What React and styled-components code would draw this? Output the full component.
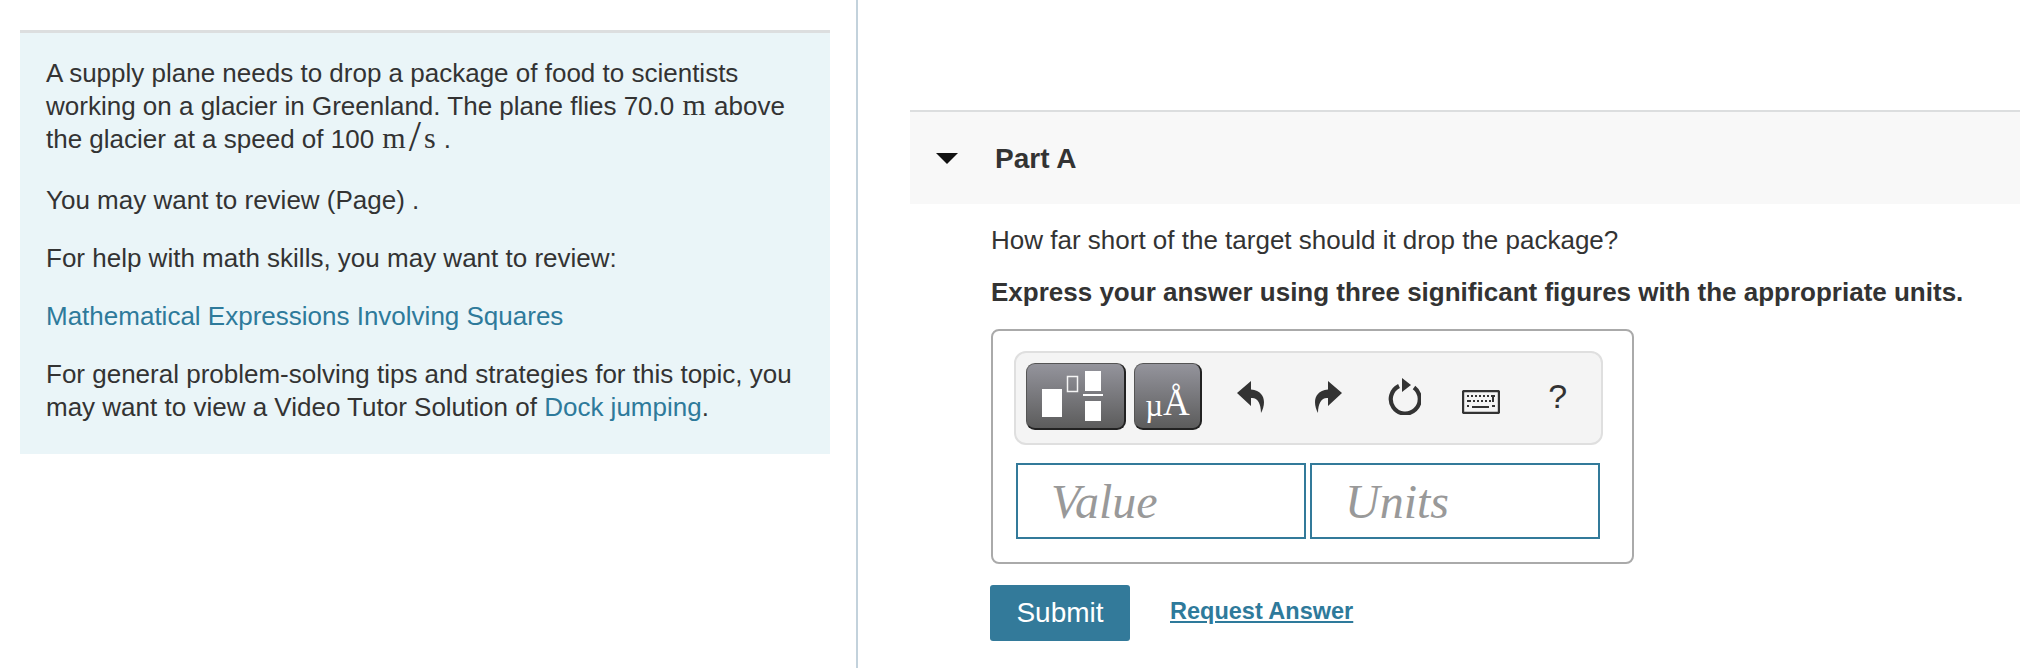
import React from 'react';
import styled, { createGlobalStyle } from 'styled-components';

const GlobalStyle = createGlobalStyle`
  html, body {
    margin: 0;
    padding: 0;
    background: #fff;
  }
  body {
    font-family: "Liberation Sans", Arial, sans-serif;
    font-size: 26px;
    line-height: 32.5px;
    color: #333;
  }
`;

const Page = styled.div`
  display: flex;
  height: 668px;
  overflow: hidden;
`;

const LeftColumn = styled.div`
  box-sizing: border-box;
  flex: 0 0 858px;
  padding: 30px 26px 0 20px;
  border-right: 2px solid #c3d2dc;
`;

const IntroPanel = styled.section`
  box-sizing: border-box;
  height: 424px;
  padding: 24px 26px 0;
  background: #eaf5f8;
  border-top: 3px solid #dcdedf;
`;

const Para = styled.p`
  margin: 0 0 ${(p) => p.$gap || 25.5}px;
  line-height: ${(p) => p.$leading || 32.5}px;
  &:last-child {
    margin-bottom: 0;
  }
`;

const Link = styled.a`
  color: #2e7a9b;
  text-decoration: none;
`;

const MathUnit = styled.span`
  margin: 0 1px;
  font-family: "Liberation Serif", serif;
  font-size: 30px;
  line-height: 20px;
`;

const MathSlash = styled.span`
  margin: 0 2px;
  font-family: "Liberation Serif", serif;
  font-size: 44px;
  font-weight: 400;
  line-height: 20px;
  vertical-align: -3px;
`;

const RightColumn = styled.div`
  flex: 1;
  padding: 110px 0 0 52px;
`;

const PartHeader = styled.header`
  box-sizing: border-box;
  display: flex;
  align-items: center;
  height: 94px;
  padding-left: 26px;
  gap: 37px;
  background: #f8f8f8;
  border-top: 2px solid #dcdedf;
`;

const Caret = styled.span`
  width: 0;
  height: 0;
  border-left: 11.5px solid transparent;
  border-right: 11.5px solid transparent;
  border-top: 11px solid #111;
`;

const PartTitle = styled.h2`
  margin: 2px 0 0;
  font-size: 28px;
  font-weight: 700;
`;

const PartBody = styled.div`
  padding: 20px 0 0 81px;
`;

const Question = styled.p`
  margin: 0;
`;

const Instruction = styled.p`
  margin: 19px 0 0;
  font-weight: 700;
`;

const AnswerBox = styled.div`
  box-sizing: border-box;
  width: 643px;
  height: 235px;
  margin-top: 21px;
  padding: 20px 0 0 21px;
  border: 2px solid #aaa;
  border-radius: 8px;
`;

const Toolbar = styled.div`
  box-sizing: border-box;
  display: flex;
  align-items: center;
  width: 589px;
  height: 94px;
  padding: 0 0 3px 10px;
  background: #f4f4f4;
  border: 2px solid #dfdfdf;
  border-radius: 12px;
`;

const PaletteButton = styled.button`
  box-sizing: border-box;
  display: flex;
  align-items: flex-end;
  justify-content: center;
  width: ${(p) => p.$width}px;
  height: 67px;
  margin-right: 8px;
  padding: 0 ${(p) => p.$nudge || 0}px ${(p) => p.$drop || 0}px 0;
  color: #fff;
  background: linear-gradient(#94949c, #5c5c5c);
  border: 1px solid #555;
  border-bottom: 2px solid #222;
  border-right: 2px solid #222;
  border-radius: 9px;
  font-family: "Liberation Serif", serif;
`;

const MuGlyph = styled.span`
  font-size: 31px;
  line-height: 44px;
`;

const AngstromGlyph = styled.span`
  font-size: 37px;
  line-height: 50px;
`;

const ToolGroup = styled.div`
  display: flex;
  align-items: center;
  margin-left: 3px;
`;

const ToolIcon = styled.span`
  display: flex;
  align-items: center;
  justify-content: center;
  width: 76.6px;
  padding-top: ${(p) => p.$dip || 0}px;
  color: #333;
  font-size: 34px;
`;

const Fields = styled.div`
  display: flex;
  gap: 4px;
  margin: 18px 0 0 2px;
`;

const Field = styled.input`
  box-sizing: border-box;
  width: 290px;
  height: 76px;
  padding: 0 0 0 33px;
  background: #fff;
  border: 2px solid #337a9a;
  border-radius: 0;
  font-family: "Liberation Serif", serif;
  font-style: italic;
  font-size: 48px;
  outline: none;
  &::placeholder {
    color: #999;
    opacity: 1;
  }
`;

const Actions = styled.div`
  display: flex;
  align-items: center;
  gap: 40px;
  margin: 21px 0 0 -1px;
`;

const SubmitButton = styled.button`
  width: 140px;
  height: 56px;
  padding: 0;
  color: #fff;
  background: #337a9a;
  border: 0;
  border-radius: 3px;
  font-family: "Liberation Sans", Arial, sans-serif;
  font-size: 28px;
`;

const RequestLink = styled.a`
  position: relative;
  top: -2px;
  color: #2e7a9b;
  font-size: 23.5px;
  font-weight: 700;
  text-decoration: underline;
`;

const FractionIcon = () => (
  <svg width="62" height="52" viewBox="0 0 62 52">
    <rect x="0" y="18" width="20" height="28" fill="#fff" />
    <rect x="25.5" y="5.5" width="10" height="15" fill="none" stroke="#f4f4f4" strokeWidth="1.5" />
    <rect x="43" y="0" width="16" height="20" fill="#fff" />
    <rect x="41" y="23" width="20" height="2" fill="#fff" />
    <rect x="43" y="30" width="16" height="20" fill="#fff" />
  </svg>
);

const ArrowIcon = ({ flip }) => (
  <svg
    width="28"
    height="32"
    viewBox="0 0 28 32"
    fill="currentColor"
    style={flip ? { transform: 'scaleX(-1)' } : undefined}
  >
    <path d="M14 0 L0 12 L14 25 L14 17 C20 16 24 22 24 32 C29 23 29 10 14 8.5 Z" />
  </svg>
);

const ResetIcon = () => (
  <svg width="34" height="37" viewBox="0 0 34 37">
    <path d="M12 8 A14.5 14.5 0 1 0 27 9.5" fill="none" stroke="currentColor" strokeWidth="4.2" />
    <path d="M15 0 L24 7 L15 14 Z" fill="currentColor" />
  </svg>
);

const KeyboardIcon = () => (
  <svg width="38" height="24" viewBox="0 0 38 24">
    <rect x="1" y="1" width="36" height="22" rx="1.5" fill="none" stroke="currentColor" strokeWidth="2.4" />
    <path
      d="M5 6h2M9 6h2M13 6h2M17 6h2M21 6h2M25 6h2M29 6h4M5 11h4M11 11h2M15 11h2M19 11h2M23 11h2M27 11h2M31 7v5M5 16h2M10 17h17M30 16h3"
      fill="none"
      stroke="currentColor"
      strokeWidth="2"
    />
  </svg>
);

export default function App() {
  return (
    <Page>
      <GlobalStyle />
      <LeftColumn>
        <IntroPanel>
          <Para $gap={27.5} $leading={33}>
            A supply plane needs to drop a package of food to scientists working on a glacier in
            Greenland. The plane flies 70.0 <MathUnit>m</MathUnit> above the glacier at a speed of
            100 <MathUnit>m</MathUnit><MathSlash>/</MathSlash><MathUnit>s</MathUnit> .
          </Para>
          <Para>You may want to review (Page) .</Para>
          <Para>For help with math skills, you may want to review:</Para>
          <Para>
            <Link href="#">Mathematical Expressions Involving Squares</Link>
          </Para>
          <Para $leading={33}>
            For general problem-solving tips and strategies for this topic, you may want to view a
            Video Tutor Solution of <Link href="#">Dock jumping</Link>.
          </Para>
        </IntroPanel>
      </LeftColumn>
      <RightColumn>
        <PartHeader>
          <Caret />
          <PartTitle>Part A</PartTitle>
        </PartHeader>
        <PartBody>
          <Question>How far short of the target should it drop the package?</Question>
          <Instruction>
            Express your answer using three significant figures with the appropriate units.
          </Instruction>
          <AnswerBox>
            <Toolbar>
              <PaletteButton $width={100} $drop={5} $nudge={5}>
                <FractionIcon />
              </PaletteButton>
              <PaletteButton $width={68}>
                <MuGlyph>µ</MuGlyph>
                <AngstromGlyph>Å</AngstromGlyph>
              </PaletteButton>
              <ToolGroup>
                <ToolIcon><ArrowIcon /></ToolIcon>
                <ToolIcon><ArrowIcon flip /></ToolIcon>
                <ToolIcon><ResetIcon /></ToolIcon>
                <ToolIcon $dip={10}><KeyboardIcon /></ToolIcon>
                <ToolIcon>?</ToolIcon>
              </ToolGroup>
            </Toolbar>
            <Fields>
              <Field placeholder="Value" />
              <Field placeholder="Units" />
            </Fields>
          </AnswerBox>
          <Actions>
            <SubmitButton>Submit</SubmitButton>
            <RequestLink href="#">Request Answer</RequestLink>
          </Actions>
        </PartBody>
      </RightColumn>
    </Page>
  );
}
